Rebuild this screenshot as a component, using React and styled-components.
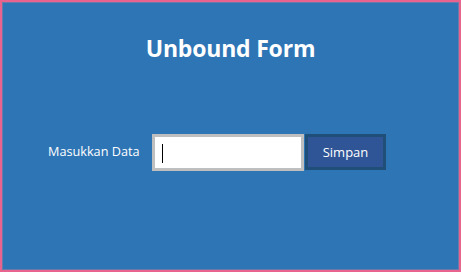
import React from "react";
import styled, { createGlobalStyle } from "styled-components";

const GlobalStyle = createGlobalStyle`
  html, body {
    margin: 0;
    padding: 0;
    background: #e8648e;
  }
  #root {
    width: 461px;
    height: 272px;
  }
`;

const Frame = styled.div`
  box-sizing: border-box;
  width: 461px;
  height: 272px;
  border: 2px solid #e8648e;
  background: #2e75b5;
  box-shadow: inset 0 0 0 1px #6b7aa6;
  display: flex;
  flex-direction: column;
  align-items: center;
  font-family: "Open Sans", "Liberation Sans", sans-serif;
`;

const Title = styled.h1`
  margin: 30px 0 0;
  font-size: 23px;
  font-weight: 700;
  line-height: 32px;
  color: #ffffff;
  letter-spacing: -0.2px;
`;

const Row = styled.div`
  display: flex;
  align-items: center;
  align-self: flex-start;
  margin: 70px 0 0 46px;
`;

const Label = styled.label`
  font-size: 12.7px;
  color: #ffffff;
  width: 104px;
  margin-top: -3px;
`;

const Input = styled.div`
  box-sizing: border-box;
  width: 152px;
  height: 37px;
  border: 3px solid #bfbfbf;
  background: #ffffff;
  display: flex;
  align-items: center;
  padding-left: 7px;
`;

const Caret = styled.span`
  width: 1px;
  height: 19px;
  background: #000000;
  margin-top: 2px;
`;

const Button = styled.button`
  box-sizing: border-box;
  width: 81px;
  height: 36px;
  border: 3px solid #1f4e79;
  background: #2f5597;
  color: #ffffff;
  font-family: "Open Sans", "Liberation Sans", sans-serif;
  font-size: 13px;
  padding: 0;
  margin-left: 1px;
  align-self: flex-start;
`;

export default function App() {
  return (
    <>
      <GlobalStyle />
      <Frame>
        <Title>Unbound Form</Title>
        <Row>
          <Label>Masukkan Data</Label>
          <Input>
            <Caret />
          </Input>
          <Button>Simpan</Button>
        </Row>
      </Frame>
    </>
  );
}
